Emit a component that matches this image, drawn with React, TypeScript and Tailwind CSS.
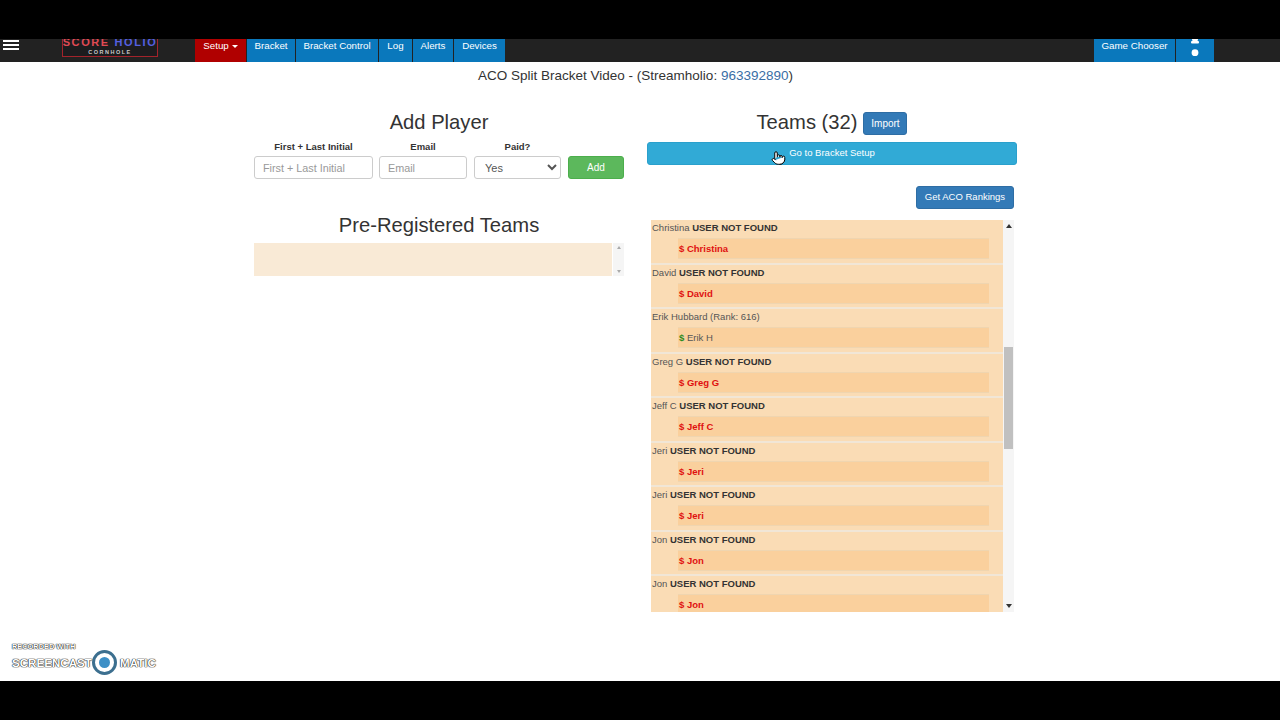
import { Pointer } from "lucide-react";

const navItems = [
  { label: "Bracket", w: "w-[48px]" },
  { label: "Bracket Control", w: "w-[82px]" },
  { label: "Log", w: "w-[33px]" },
  { label: "Alerts", w: "w-[40px]" },
  { label: "Devices", w: "w-[51px]" },
];

const teams = [
  { name: "Christina", short: "Christina", found: false },
  { name: "David", short: "David", found: false },
  { name: "Erik Hubbard (Rank: 616)", short: "Erik H", found: true },
  { name: "Greg G", short: "Greg G", found: false },
  { name: "Jeff C", short: "Jeff C", found: false },
  { name: "Jeri", short: "Jeri", found: false },
  { name: "Jeri", short: "Jeri", found: false },
  { name: "Jon", short: "Jon", found: false },
  { name: "Jon", short: "Jon", found: false },
];

function TeamRow({ name, short, found }: { name: string; short: string; found: boolean }) {
  return (
    <div className="h-[44.5px] shrink-0 bg-[#fadcb5] border-b-2 border-[#f1e6d6] text-[9.5px] leading-[14px] text-[#555]">
      <div className="pl-px pt-[1px] h-[17px]">
        {name} {!found && <b className="text-[#333] font-bold">USER NOT FOUND</b>}
      </div>
      <div className="ml-[27px] mr-[14px] h-[21px] mt-[1px] pt-[1px] bg-[#fad09d] border-y border-[#efd5b0] pl-px flex items-center">
        {found ? (
          <span><b className="text-[#2b8a1c]">$</b> {short}</span>
        ) : (
          <b className="text-[#e01010]">$ {short}</b>
        )}
      </div>
    </div>
  );
}

export default function App() {
  return (
    <div className="h-[720px] w-[1280px] flex flex-col overflow-hidden bg-white font-['Liberation_Sans',Arial,sans-serif] text-[#333] relative">
      <div className="h-[39px] bg-black shrink-0" />

      <nav className="h-[23px] shrink-0 bg-[#222] flex text-white text-[9.75px] leading-[13px] overflow-hidden">
        <div className="w-[22px] ml-[3px] flex flex-col gap-[2px] pt-[1px]">
          <span className="block h-[2px] w-[16px] bg-white" />
          <span className="block h-[2px] w-[16px] bg-white" />
          <span className="block h-[2px] w-[16px] bg-white" />
        </div>
        <div className="ml-[37px] w-[96px] h-[18px] border border-t-0 border-[#a3232b] bg-[#1c1c1e] flex flex-col items-center justify-end overflow-hidden leading-none">
          <div className="text-[11px] font-bold tracking-[1.6px] whitespace-nowrap h-[7px] flex items-end">
            <span className="text-[#e04a55]">SCORE&nbsp;</span>
            <span className="text-[#5560e0]">HOLIO</span>
          </div>
          <div className="text-[5.5px] font-bold tracking-[1.5px] text-[#c9c9c9] mt-[2px] mb-[1px]">CORNHOLE</div>
        </div>
        <div className="ml-[37px] w-[51px] bg-[#b00000] flex justify-center gap-[3px]">
          <span>Setup</span>
          <span className="mt-[6px] w-0 h-0 border-x-[3px] border-x-transparent border-t-[3px] border-t-white" />
        </div>
        {navItems.map((item) => (
          <div key={item.label} className={`${item.w} ml-[1px] bg-[#0a78bc] text-center whitespace-nowrap`}>
            {item.label}
          </div>
        ))}
        <div className="ml-[589px] w-[81px] bg-[#0a78bc] text-center">Game Chooser</div>
        <div className="ml-[1px] w-[38px] bg-[#0a78bc]">
          <svg width="38" height="23" viewBox="0 0 38 23" fill="white">
            <circle cx="19" cy="0" r="3" />
            <rect x="15" y="2" width="8" height="2.5" rx="1" />
            <circle cx="19" cy="13.7" r="3.4" />
          </svg>
        </div>
      </nav>

      <main className="flex-1 flex flex-col">
        <div className="text-center text-[13.5px] leading-[18px] pt-[5px] pr-[9px]">
          ACO Split Bracket Video - (Streamholio: <span className="text-[#3a6ea5]">963392890</span>)
        </div>

        <div className="flex ml-[254px] gap-[23px] mt-[25px]">
          <section className="w-[370px] flex flex-col">
            <h2 className="text-[20.2px] leading-[24px] text-center">Add Player</h2>
            <div className="flex gap-[6px] mt-[6px]">
              <label className="w-[119px] text-center text-[9.5px] font-bold leading-[14px]">
                First + Last Initial
                <input
                  placeholder="First + Last Initial"
                  className="mt-[2px] block w-full h-[23px] px-[8px] text-[10.8px] font-normal border border-[#ccc] rounded-[3px] placeholder:text-[#999] outline-none"
                />
              </label>
              <label className="w-[88px] text-center text-[9.5px] font-bold leading-[14px]">
                Email
                <input
                  placeholder="Email"
                  className="mt-[2px] block w-full h-[23px] px-[8px] text-[10.8px] font-normal border border-[#ccc] rounded-[3px] placeholder:text-[#999] outline-none"
                />
              </label>
              <label className="ml-px w-[87px] text-center text-[9.5px] font-bold leading-[14px]">
                Paid?
                <select className="mt-[2px] block w-full h-[23px] px-[6px] text-[11px] font-normal text-[#555] bg-white border border-[#ccc] rounded-[3px] outline-none">
                  <option>Yes</option>
                </select>
              </label>
              <button className="ml-px self-end w-[56px] h-[23px] bg-[#5cb85c] text-white text-[10px] rounded-[3px] border border-[#4cae4c]">
                Add
              </button>
            </div>

            <h2 className="text-[20.2px] leading-[24px] text-center mt-[34px]">Pre-Registered Teams</h2>
            <div className="mt-[6px] h-[33px] flex">
              <div className="flex-1 bg-[#f9ead6]" />
              <div className="w-[11px] ml-px bg-[#f5f5f5] flex flex-col items-center justify-between py-[3px]">
                <span className="w-0 h-0 border-x-[2.5px] border-x-transparent border-b-[3px] border-b-[#aaa]" />
                <span className="w-0 h-0 border-x-[2.5px] border-x-transparent border-t-[3px] border-t-[#aaa]" />
              </div>
            </div>
          </section>

          <section className="w-[370px] flex flex-col relative">
            <div className="flex items-start justify-center gap-[6px] h-[24px]">
              <h2 className="text-[20.2px] leading-[24px]">Teams (32)</h2>
              <button className="mt-[2px] w-[44px] h-[23px] bg-[#337ab7] border border-[#2e6da4] text-white text-[10px] rounded-[3px]">
                Import
              </button>
            </div>
            <button className="mt-[8px] h-[23px] w-full bg-[#31aad6] border border-[#2aa0cc] text-white text-[9.5px] rounded-[3px] pb-[1px]">
              Go to Bracket Setup
            </button>
            <Pointer className="absolute left-[124px] top-[40px] w-[15px] h-[16px] fill-white text-black" strokeWidth={1.6} />

            <div className="flex justify-end mt-[21px] pr-[3px]">
              <button className="w-[98px] h-[23px] bg-[#337ab7] border border-[#2e6da4] text-white text-[9.5px] rounded-[3px]">
                Get ACO Rankings
              </button>
            </div>

            <div className="mt-[11px] ml-[4px] mr-[3px] h-[392px] flex overflow-hidden">
              <div className="w-[352px] flex flex-col overflow-hidden">
                {teams.map((t, i) => (
                  <TeamRow key={i} {...t} />
                ))}
              </div>
              <div className="w-[11px] bg-[#f5f5f5] flex flex-col items-center justify-between py-[4px] relative">
                <span className="w-0 h-0 border-x-[3px] border-x-transparent border-b-[4px] border-b-[#333]" />
                <div className="absolute left-[1px] top-[127px] w-[9px] h-[102px] bg-[#c0c0c0]" />
                <span className="w-0 h-0 border-x-[3px] border-x-transparent border-t-[4px] border-t-[#333]" />
              </div>
            </div>
          </section>
        </div>
      </main>

      <div className="h-[39px] bg-black shrink-0" />

      <div className="absolute left-[12px] top-[643px] text-white font-bold leading-none [text-shadow:0_0_1px_#222,0_0_1px_#222,0_0_1px_#222]">
        <div className="text-[7.4px] whitespace-nowrap">RECORDED WITH</div>
        <div className="flex items-center">
          <span className="text-[11.6px] w-[80px] whitespace-nowrap">SCREENCAST</span>
          <span className="w-[25px] h-[25px] rounded-full border-[3px] border-[#3c6f8f] bg-white flex items-center justify-center">
            <span className="w-[11px] h-[11px] rounded-full bg-[#3d8fc6]" />
          </span>
          <span className="text-[11.6px] ml-[3px]">MATIC</span>
        </div>
      </div>
    </div>
  );
}
